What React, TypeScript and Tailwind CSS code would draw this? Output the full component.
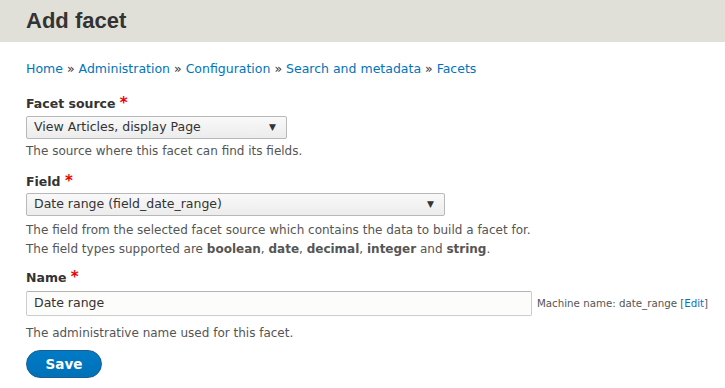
export default function App() {
  const font = { fontFamily: '"DejaVu Sans", Verdana, sans-serif' }
  return (
    <div className="w-[725px] h-[388px] bg-white text-[#333] overflow-hidden" style={font}>
      <div className="h-[42px] bg-[#e0e0d8] px-[26px] pt-[6px]">
        <h1 className="text-[22px] font-bold leading-[30px] text-[#333] font-['Liberation_Sans',Arial,sans-serif]">
          Add facet
        </h1>
      </div>
      <div className="px-[26px]">
        <nav className="mt-[18px] text-[12.5px] leading-[17px] text-[#0074bd]">
          <a>Home</a> <span className="text-[#333]">»</span> <a>Administration</a>{" "}
          <span className="text-[#333]">»</span> <a>Configuration</a> <span className="text-[#333]">»</span>{" "}
          <a>Search and metadata</a> <span className="text-[#333]">»</span> <a>Facets</a>
        </nav>

        <div className="mt-[18px]">
          <label className="block text-[12.5px] font-bold leading-[17px]">
            Facet source <span className="text-[#e00] text-[15px] leading-none">*</span>
          </label>
          <div className="mt-[4px] w-[261px] h-[23px] flex items-center justify-between pl-[7px] pr-[10px] border border-[#b8b8b8] rounded-[2px] bg-gradient-to-b from-[#f9f9f9] to-[#ececec] text-[12.5px]">
            <span>View Articles, display Page</span>
            <span className="text-[9px]">▼</span>
          </div>
          <p className="mt-[4px] text-[12px] leading-[16px] text-[#555]">The source where this facet can find its fields.</p>
        </div>

        <div className="mt-[14px]">
          <label className="block text-[12.5px] font-bold leading-[17px]">
            Field <span className="text-[#e00] text-[15px] leading-none">*</span>
          </label>
          <div className="mt-[3px] w-[419px] h-[23px] flex items-center justify-between pl-[7px] pr-[10px] border border-[#b8b8b8] rounded-[2px] bg-gradient-to-b from-[#f9f9f9] to-[#ececec] text-[12.5px]">
            <span>Date range (field_date_range)</span>
            <span className="text-[9px]">▼</span>
          </div>
          <div className="mt-[5px] text-[12px] leading-[19px] text-[#555]">
            <p>The field from the selected facet source which contains the data to build a facet for.</p>
            <p>
              The field types supported are <b>boolean</b>, <b>date</b>, <b>decimal</b>, <b>integer</b> and{" "}
              <b>string</b>.
            </p>
          </div>
        </div>

        <div className="mt-[10px]">
          <label className="block text-[12.5px] font-bold leading-[17px]">
            Name <span className="text-[#e00] text-[15px] leading-none">*</span>
          </label>
          <div className="mt-[5px] flex items-center">
            <div className="w-[506px] h-[25px] shrink-0 flex items-center px-[7px] border border-[#ccc] border-t-[#b4b4b4] rounded-[2px] bg-[#fcfcfa] text-[12.5px]">
              Date range
            </div>
            <span className="ml-[5px] whitespace-nowrap text-[10.25px] text-[#555]">
              Machine name: date_range [<a className="text-[#0074bd]">Edit</a>]
            </span>
          </div>
          <p className="mt-[9px] text-[12px] leading-[16px] text-[#555]">The administrative name used for this facet.</p>
        </div>

        <button className="mt-[9px] w-[76px] h-[28px] rounded-[14px] border border-[#1e5c90] bg-gradient-to-b from-[#007bc6] to-[#0071b8] text-white text-[13.5px] font-bold">
          Save
        </button>
      </div>
    </div>
  )
}
